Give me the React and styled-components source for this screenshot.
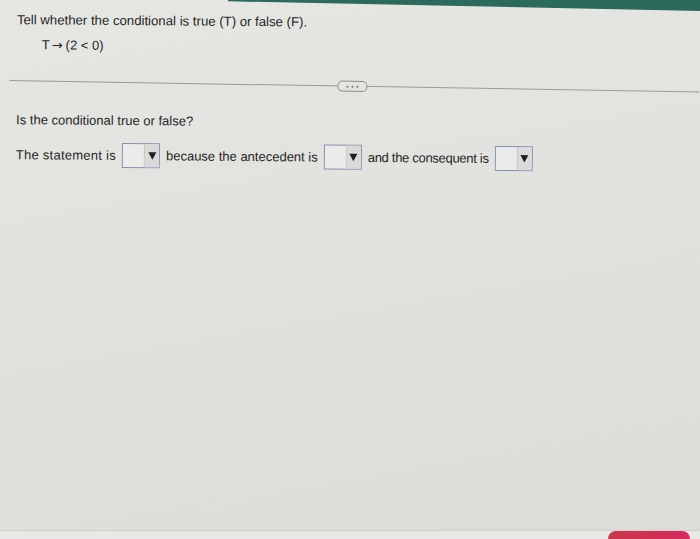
import React from "react";
import styled, { createGlobalStyle } from "styled-components";

const Global = createGlobalStyle`
  html, body { margin: 0; padding: 0; }
  body {
    width: 700px;
    height: 539px;
    overflow: hidden;
    background: #e1e2de;
    font-family: "Liberation Sans", Arial, sans-serif;
    color: #262626;
  }
`;

const Page = styled.div`
  position: relative;
  width: 700px;
  height: 539px;
  background: linear-gradient(170deg, #e6e7e3 0%, #e0e1dd 55%, #dcddd9 100%);
  display: flex;
  flex-direction: column;
  overflow: hidden;
`;

const TopBand = styled.div`
  height: 11px;
  margin-left: 228px;
  background: #2c6b5c;
  clip-path: polygon(0 0, 100% 0, 100% 100%, 0 12%);
`;

const Content = styled.div`
  flex: 1;
  display: flex;
  flex-direction: column;
  transform: rotate(0.45deg);
  transform-origin: 0 0;
`;

const Prompt = styled.div`
  padding: 1px 0 0 17px;
  font-size: 13.2px;
  line-height: 16px;
`;

const Expression = styled.div`
  display: flex;
  align-items: center;
  padding: 9px 0 0 42px;
  font-size: 13px;
  line-height: 16px;
`;

const Arrow = styled.span`
  font-family: "DejaVu Sans", sans-serif;
  font-size: 13px;
  margin: 0 3px 0 2px;
`;

const Divider = styled.div`
  margin: 30px 0 0 10px;
  height: 1px;
  background: #9a9b98;
  position: relative;
  transform: rotate(0.5deg);
  transform-origin: 345px 0;
`;

const MorePill = styled.div`
  position: absolute;
  left: 328px;
  top: -5px;
  width: 28px;
  height: 9px;
  border: 1px solid #8d8e8c;
  border-radius: 5px;
  background: #e4e5e1;
  display: flex;
  align-items: center;
  justify-content: center;
  gap: 3px;
`;

const Dot = styled.span`
  width: 2px;
  height: 2px;
  border-radius: 50%;
  background: #6f706d;
`;

const Question = styled.div`
  padding: 28px 0 0 17px;
  font-size: 13px;
  line-height: 16px;
`;

const AnswerRow = styled.div`
  display: flex;
  align-items: center;
  gap: 6px;
  padding: 14px 0 0 17px;
  font-size: 13px;
  line-height: 16px;
`;

const Label = styled.span`
  letter-spacing: ${(p) => p.$track || 0}px;
`;

const Select = styled.div`
  width: 36px;
  height: 23px;
  border: 1px solid #8590b5;
  background: #ebecea;
  display: flex;
  justify-content: flex-end;
  box-sizing: content-box;
`;

const ArrowCell = styled.div`
  width: 14px;
  border-left: 1px solid #c9cac7;
  background: #dadbd8;
  display: flex;
  align-items: center;
  justify-content: center;
`;

const BottomBar = styled.div`
  height: 8px;
  border-top: 1px solid #cfd0cc;
  background: #e8e9e6;
  display: flex;
  justify-content: flex-end;
  padding-right: 10px;
`;

const ActionButton = styled.div`
  width: 82px;
  border-radius: 8px 8px 0 0;
  background: linear-gradient(90deg, #c9374a, #d6295e);
`;

function Dropdown() {
  return (
    <Select>
      <ArrowCell>
        <svg width="9" height="9" viewBox="0 0 9 9">
          <polygon points="0.5,1 8.5,1 4.5,8.5" fill="#1e1e1e" />
        </svg>
      </ArrowCell>
    </Select>
  );
}

export default function App() {
  return (
    <>
      <Global />
      <Page>
        <TopBand />
        <Content>
          <Prompt>Tell whether the conditional is true (T) or false (F).</Prompt>
          <Expression>
            <span>T</span>
            <Arrow>→</Arrow>
            <span>(2 &lt; 0)</span>
          </Expression>
          <Divider>
            <MorePill>
              <Dot />
              <Dot />
              <Dot />
            </MorePill>
          </Divider>
          <Question>Is the conditional true or false?</Question>
          <AnswerRow>
            <Label $track={0.25}>The statement is</Label>
            <Dropdown />
            <Label>because the antecedent is</Label>
            <Dropdown />
            <Label $track={-0.3}>and the consequent is</Label>
            <Dropdown />
          </AnswerRow>
        </Content>
        <BottomBar>
          <ActionButton />
        </BottomBar>
      </Page>
    </>
  );
}
